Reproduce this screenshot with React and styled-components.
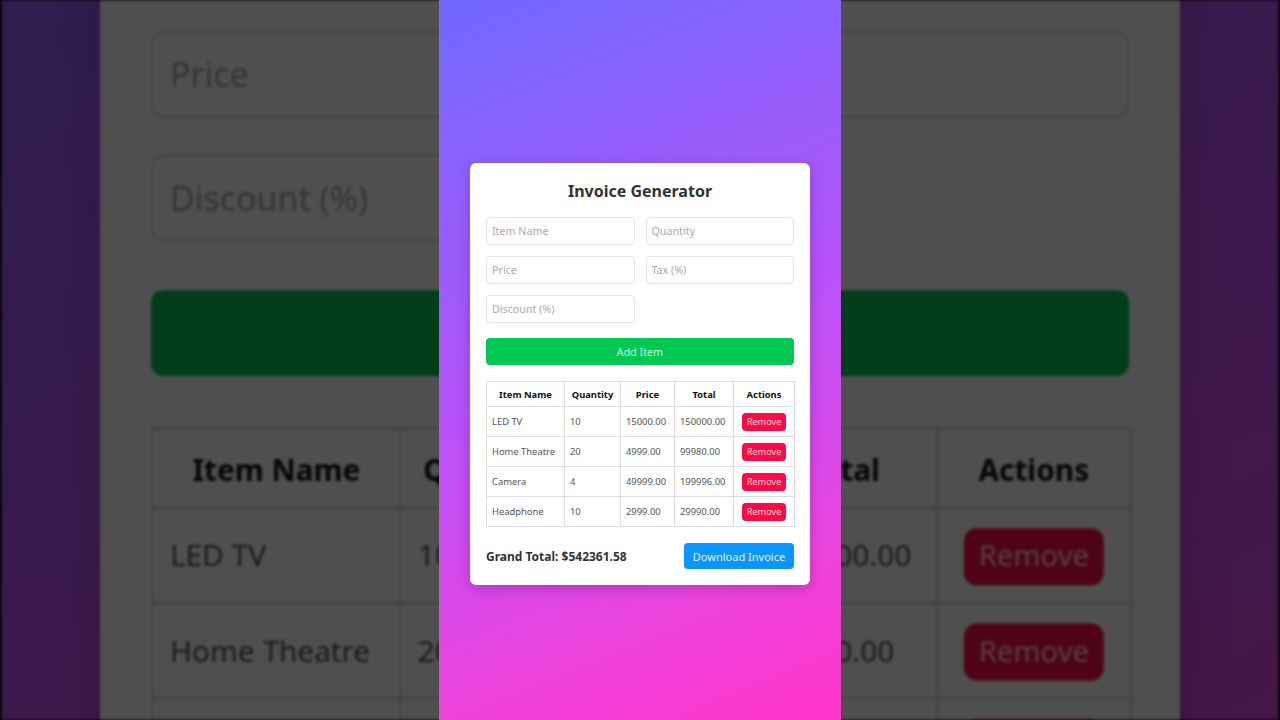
import React from "react";
import styled, { createGlobalStyle } from "styled-components";

const GlobalStyle = createGlobalStyle`
  html, body {
    margin: 0;
    padding: 0;
    background: #000;
    overflow: hidden;
  }
  * {
    box-sizing: border-box;
  }
`;

const Stage = styled.div`
  display: grid;
  width: 1280px;
  height: 720px;
  overflow: hidden;
  font-family: "Noto Sans", "Open Sans", sans-serif;
`;

const Layer = styled.div`
  grid-area: 1 / 1;
  display: flex;
  justify-content: center;
  overflow: hidden;
  z-index: ${(p) => p.$level || 0};
`;

const Backdrop = styled(Layer)`
  filter: blur(1.5px) brightness(0.31);
`;

const Zoomed = styled.div`
  display: flex;
  transform: scale(3.176);
  transform-origin: 50% 50%;
`;

const Screen = styled.div`
  width: 402px;
  height: 720px;
  padding-top: 163px;
  display: flex;
  flex-direction: column;
  align-items: center;
  background: linear-gradient(
    158deg,
    #6f69ff 0%,
    #9a5cfb 30%,
    #c14ff5 55%,
    #ec43dd 80%,
    #ff33c8 100%
  );
`;

const Card = styled.div`
  width: 340px;
  background: #fff;
  border-radius: 6px;
  padding: 16px;
  box-shadow: 0 4px 14px rgba(60, 0, 80, 0.25);
`;

const Title = styled.h2`
  margin: 0 0 14px;
  font-size: 16px;
  line-height: 24px;
  font-weight: 700;
  text-align: center;
  color: #333;
`;

const Fields = styled.div`
  display: grid;
  grid-template-columns: 1fr 1fr;
  gap: 11px;
`;

const Field = styled.input`
  height: 28px;
  width: 100%;
  border: 1px solid #e6e6e6;
  border-radius: 4px;
  padding: 0 5px;
  font-family: inherit;
  font-size: 10.7px;
  color: #333;
  outline: none;
  &::placeholder {
    color: #aaa;
  }
`;

const AddButton = styled.button`
  display: block;
  width: 100%;
  height: 27px;
  margin-top: 15px;
  border: none;
  border-radius: 4px;
  background: #00c853;
  color: #b9ffe8;
  font-family: inherit;
  font-size: 10.7px;
`;

const Table = styled.table`
  width: 100%;
  margin-top: 16px;
  border-collapse: collapse;
  table-layout: fixed;
  font-size: 9.4px;
  color: #555;
`;

const Th = styled.th`
  height: 25px;
  padding: 0 2px;
  border: 1px solid #ddd;
  font-weight: 700;
  color: #111;
  text-align: center;
  width: ${(p) => p.$w}px;
`;

const Td = styled.td`
  height: 30px;
  padding: 0 5px;
  border: 1px solid #ddd;
  text-align: ${(p) => (p.$center ? "center" : "left")};
  white-space: nowrap;
`;

const RemoveButton = styled.button`
  height: 18px;
  padding: 0 5px;
  border: none;
  border-radius: 4px;
  background: #ff0a47;
  color: #ffd5de;
  font-family: inherit;
  font-size: 9.2px;
`;

const Footer = styled.div`
  display: flex;
  align-items: center;
  justify-content: space-between;
  margin-top: 16px;
`;

const GrandTotal = styled.div`
  font-size: 12px;
  font-weight: 700;
  color: #333;
`;

const DownloadButton = styled.button`
  width: 110px;
  height: 26px;
  border: none;
  border-radius: 4px;
  background: #0a95ff;
  color: #e6f6ff;
  font-family: inherit;
  font-size: 11px;
`;

const columns = [
  { label: "Item Name", w: 78 },
  { label: "Quantity", w: 56 },
  { label: "Price", w: 54 },
  { label: "Total", w: 59 },
  { label: "Actions", w: 61 },
];

const items = [
  { name: "LED TV", qty: 10, price: 15000, tax: 0, discount: 0 },
  { name: "Home Theatre", qty: 20, price: 4999, tax: 0, discount: 0 },
  { name: "Camera", qty: 4, price: 49999, tax: 0, discount: 0 },
  { name: "Headphone", qty: 10, price: 2999, tax: 0, discount: 0 },
];

const lineTotal = (item) =>
  item.qty * item.price * (1 + item.tax / 100) * (1 - item.discount / 100);

const InvoiceScreen = () => (
  <Screen>
    <Card>
      <Title>Invoice Generator</Title>
      <Fields>
        <Field placeholder="Item Name" />
        <Field placeholder="Quantity" />
        <Field placeholder="Price" />
        <Field placeholder="Tax (%)" />
        <Field placeholder="Discount (%)" />
      </Fields>
      <AddButton>Add Item</AddButton>
      <Table>
        <thead>
          <tr>
            {columns.map((c) => (
              <Th key={c.label} $w={c.w}>
                {c.label}
              </Th>
            ))}
          </tr>
        </thead>
        <tbody>
          {items.map((item) => (
            <tr key={item.name}>
              <Td>{item.name}</Td>
              <Td>{item.qty}</Td>
              <Td>{item.price.toFixed(2)}</Td>
              <Td>{lineTotal(item).toFixed(2)}</Td>
              <Td $center>
                <RemoveButton>Remove</RemoveButton>
              </Td>
            </tr>
          ))}
        </tbody>
      </Table>
      <Footer>
        <GrandTotal>Grand Total: $542361.58</GrandTotal>
        <DownloadButton>Download Invoice</DownloadButton>
      </Footer>
    </Card>
  </Screen>
);

const App = () => (
  <>
    <GlobalStyle />
    <Stage>
      <Backdrop aria-hidden="true">
        <Zoomed>
          <InvoiceScreen />
        </Zoomed>
      </Backdrop>
      <Layer $level={1}>
        <InvoiceScreen />
      </Layer>
    </Stage>
  </>
);

export default App;
